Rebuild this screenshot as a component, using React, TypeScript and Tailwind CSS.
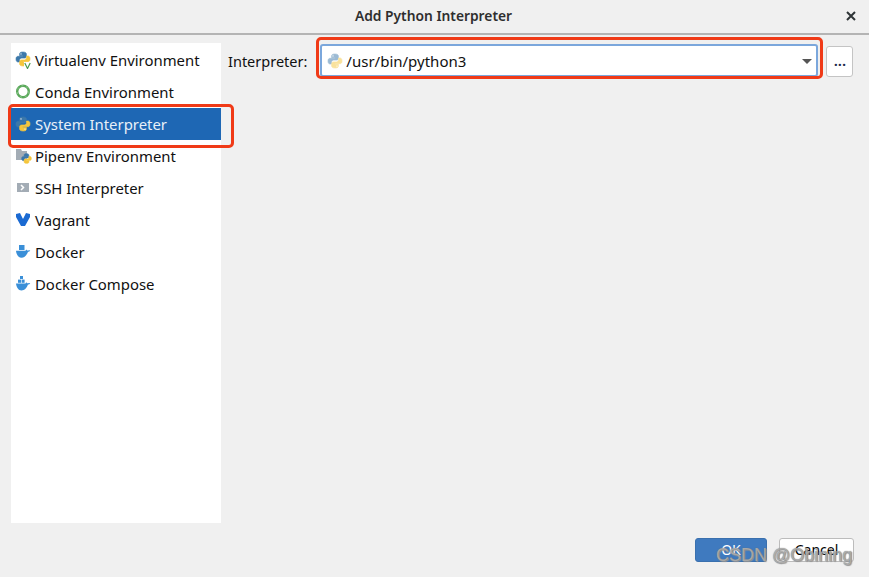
import type { ReactNode } from "react";

const font = { fontFamily: '"Noto Sans", sans-serif' };

const blue = "M7.900 1C5 1 4.600 2 4.600 3v1.700h3.500v.6H3C1.700 5.300 1 6.300 1 8.100s.8 2.900 2 2.900h1.500V9.300c0-1.200 1-2.200 2.200-2.200h2.900c1 0 1.800-.8 1.800-1.800V3c0-1.200-1.300-2-3.500-2z";
const yellow = "M8.100 15c2.900 0 3.300-1 3.300-2v-1.700H7.900v-.6H13c1.300 0 2-1 2-2.800S14.200 5 13 5h-1.500v1.700c0 1.200-1 2.200-2.200 2.200H6.400c-1 0-1.800.8-1.800 1.800V13c0 1.200 1.300 2 3.500 2z";

const PythonIcon = ({ faded = false }: { faded?: boolean }) => (
  <svg width="16" height="16" viewBox="0 0 16 16" className={faded ? "opacity-50" : ""}>
    <path d={blue} fill="#3c78aa" stroke="#3c78aa" strokeWidth=".6" />
    <path d={yellow} fill="#f5c63c" stroke="#f5c63c" strokeWidth=".6" />
    <circle cx="6" cy="2.900" r=".7" fill="#fff" />
    <circle cx="10" cy="13.100" r=".7" fill="#fff" />
  </svg>
);

const VirtualenvIcon = () => (
  <div className="relative h-4 w-4">
    <div className="absolute left-0 top-[-1px]">
      <PythonIcon />
    </div>
    <svg width="7" height="7" viewBox="0 0 7 7" className="absolute right-0 top-[10px] bg-white">
      <path d="M.8 1l2.700 5.500L6.200 1" fill="none" stroke="#4c9a50" strokeWidth="1.200" />
    </svg>
  </div>
);

const CondaIcon = () => (
  <svg width="16" height="16" viewBox="0 0 16 16">
    <circle cx="8" cy="7.500" r="5.800" fill="none" stroke="#5aa85a" strokeWidth="2.400" />
    <circle cx="8" cy="7.500" r="5.800" fill="none" stroke="#8fc98f" strokeWidth="1" strokeDasharray="2 3" />
  </svg>
);

const PipenvIcon = () => (
  <div className="relative h-4 w-4">
    <svg width="11" height="11" viewBox="0 0 11 11" className="absolute left-[1px] top-[1px]">
      <path d="M0 0h5l1 2h5v9H0z" fill="#a3acb5" />
    </svg>
    <svg width="11" height="11" viewBox="0 0 16 16" className="absolute left-[6px] top-[5px]">
      <path d={blue} fill="#3c78aa" stroke="#3c78aa" />
      <path d={yellow} fill="#f5c63c" stroke="#f5c63c" />
    </svg>
  </div>
);

const SshIcon = () => (
  <svg width="16" height="16" viewBox="0 0 16 16">
    <rect x="2" y="3" width="12" height="9" fill="#a3acb5" />
    <path d="M6 5l2.500 2.500L6 10" fill="none" stroke="#fff" strokeWidth="1.500" />
  </svg>
);

const VagrantIcon = () => (
  <svg width="16" height="16" viewBox="0 0 16 16">
    <path d="M1 2l4-1 3 6 3-6 4 1v3l-5 9H6L1 5z" fill="#1b6ad2" />
  </svg>
);

const DockerIcon = ({ compose = false }: { compose?: boolean }) => (
  <svg width="16" height="16" viewBox="0 0 16 16">
    {compose ? (
      <>
        <rect x="5" y="0" width="3" height="3" fill="#3a8fd8" />
        <rect x="3" y="3.600" width="3" height="3.200" fill="#3a8fd8" />
        <rect x="6.600" y="3.600" width="3" height="3.200" fill="#3a8fd8" />
      </>
    ) : (
      <rect x="4" y="1" width="5.500" height="5" fill="#3a8fd8" />
    )}
    <path
      d={compose ? "M1 7.500h9.500l.7-1.300 1 1 3-.2c-.4 1-1.200 1.500-2.200 1.500-1 3-3.500 6-6.500 6-3.200 0-5.200-3.500-5.500-7z" : "M1 6.800h9.500l.7-1.300 1 1 3-.2c-.4 1-1.200 1.500-2.200 1.500-1 3-3.500 6-6.500 6-3.200 0-5.200-3.500-5.500-7z"}
      fill="#3a8fd8"
    />
  </svg>
);

const items: { label: string; icon: ReactNode; selected?: boolean }[] = [
  { label: "Virtualenv Environment", icon: <VirtualenvIcon /> },
  { label: "Conda Environment", icon: <CondaIcon /> },
  { label: "System Interpreter", icon: <PythonIcon />, selected: true },
  { label: "Pipenv Environment", icon: <PipenvIcon /> },
  { label: "SSH Interpreter", icon: <SshIcon /> },
  { label: "Vagrant", icon: <VagrantIcon /> },
  { label: "Docker", icon: <DockerIcon /> },
  { label: "Docker Compose", icon: <DockerIcon compose /> },
];

const App = () => {
  return (
    <div style={font} className="relative flex h-[577px] w-[869px] flex-col overflow-hidden bg-[#f0f0f0] text-[14.900px] text-[#111]">
      <div className="relative flex h-[35px] shrink-0 items-center justify-center border-b-2 border-[#b4b4b4] bg-[#f0f0f0]">
        <span className="mb-[1px] mr-[2px] text-[13.800px] font-semibold text-[#2e2e2e]">Add Python Interpreter</span>
        <svg width="10" height="10" viewBox="0 0 10 10" className="absolute right-[13px] top-[11px]">
          <path d="M1 1l8 8M9 1l-8 8" stroke="#2e3436" strokeWidth="2" />
        </svg>
      </div>

      <div className="flex min-h-0 flex-1 pl-[11px] pr-[15px] pt-[8px]">
        <div className="flex h-[480px] w-[210px] shrink-0 flex-col bg-white pt-[1px]">
          {items.map((item) => (
            <div
              key={item.label}
              className={
                item.selected
                  ? "flex h-[32px] items-center gap-[4px] bg-[#1e67b4] pl-[4px] text-[#e8f0f8]"
                  : "flex h-[32px] items-center gap-[4px] pl-[4px]"
              }
            >
              <span className="flex w-[16px] shrink-0 justify-center">{item.icon}</span>
              <span className="whitespace-nowrap">{item.label}</span>
            </div>
          ))}
        </div>

        <div className="flex flex-1 items-start pl-[7px] pt-[1px]">
          <span className="mr-[13px] mt-[7px] whitespace-nowrap text-[14.500px]">Interpreter:</span>
          <div className="relative flex h-[33px] w-[498px] items-center rounded-[3px] border-2 border-[#7ba7dc] bg-white pl-[5px]">
            <PythonIcon faded />
            <span className="ml-[3px] mt-[2px] text-[15px]">/usr/bin/python3</span>
            <div className="absolute right-[4px] top-[13px] h-0 w-0 border-x-[5px] border-t-[5px] border-x-transparent border-t-[#555]" />
          </div>
          <button className="ml-[8px] mt-[2px] flex h-[31px] w-[27px] items-center justify-center rounded-[3px] border border-[#c4c4c4] bg-white pb-[2px] text-[15px] font-semibold text-[#1c2a4a]">
            ...
          </button>
        </div>
      </div>

      <div className="flex h-[54px] shrink-0 justify-end gap-[12px] pr-[15px] pt-[15px]">
        <button className="h-[24px] w-[72px] rounded-[3px] border border-[#3a70ae] bg-[#3f7abf] text-[14px] leading-none text-white">
          OK
        </button>
        <button className="h-[24px] w-[75px] rounded-[3px] border border-[#bcbcbc] bg-white text-[14px] leading-none text-black">
          Cancel
        </button>
      </div>

      {/* red annotation boxes */}
      <div className="pointer-events-none absolute left-[8px] top-[104px] h-[44px] w-[226px] rounded-[5px] border-[3px] border-[#f03a17]" />
      <div className="pointer-events-none absolute left-[316px] top-[37px] h-[42px] w-[507px] rounded-[5px] border-[3px] border-[#f03a17]" />

      {/* watermark */}
      <span
        style={{ fontFamily: '"Liberation Sans", sans-serif' }}
        className="absolute left-[716px] top-[543px] text-[18px] leading-[24px] text-[#c4c4c4]/70 [text-shadow:0_0_1px_#666,1px_1px_1px_#999]"
      >
        CSDN @Obining
      </span>
    </div>
  );
};

export default App;
